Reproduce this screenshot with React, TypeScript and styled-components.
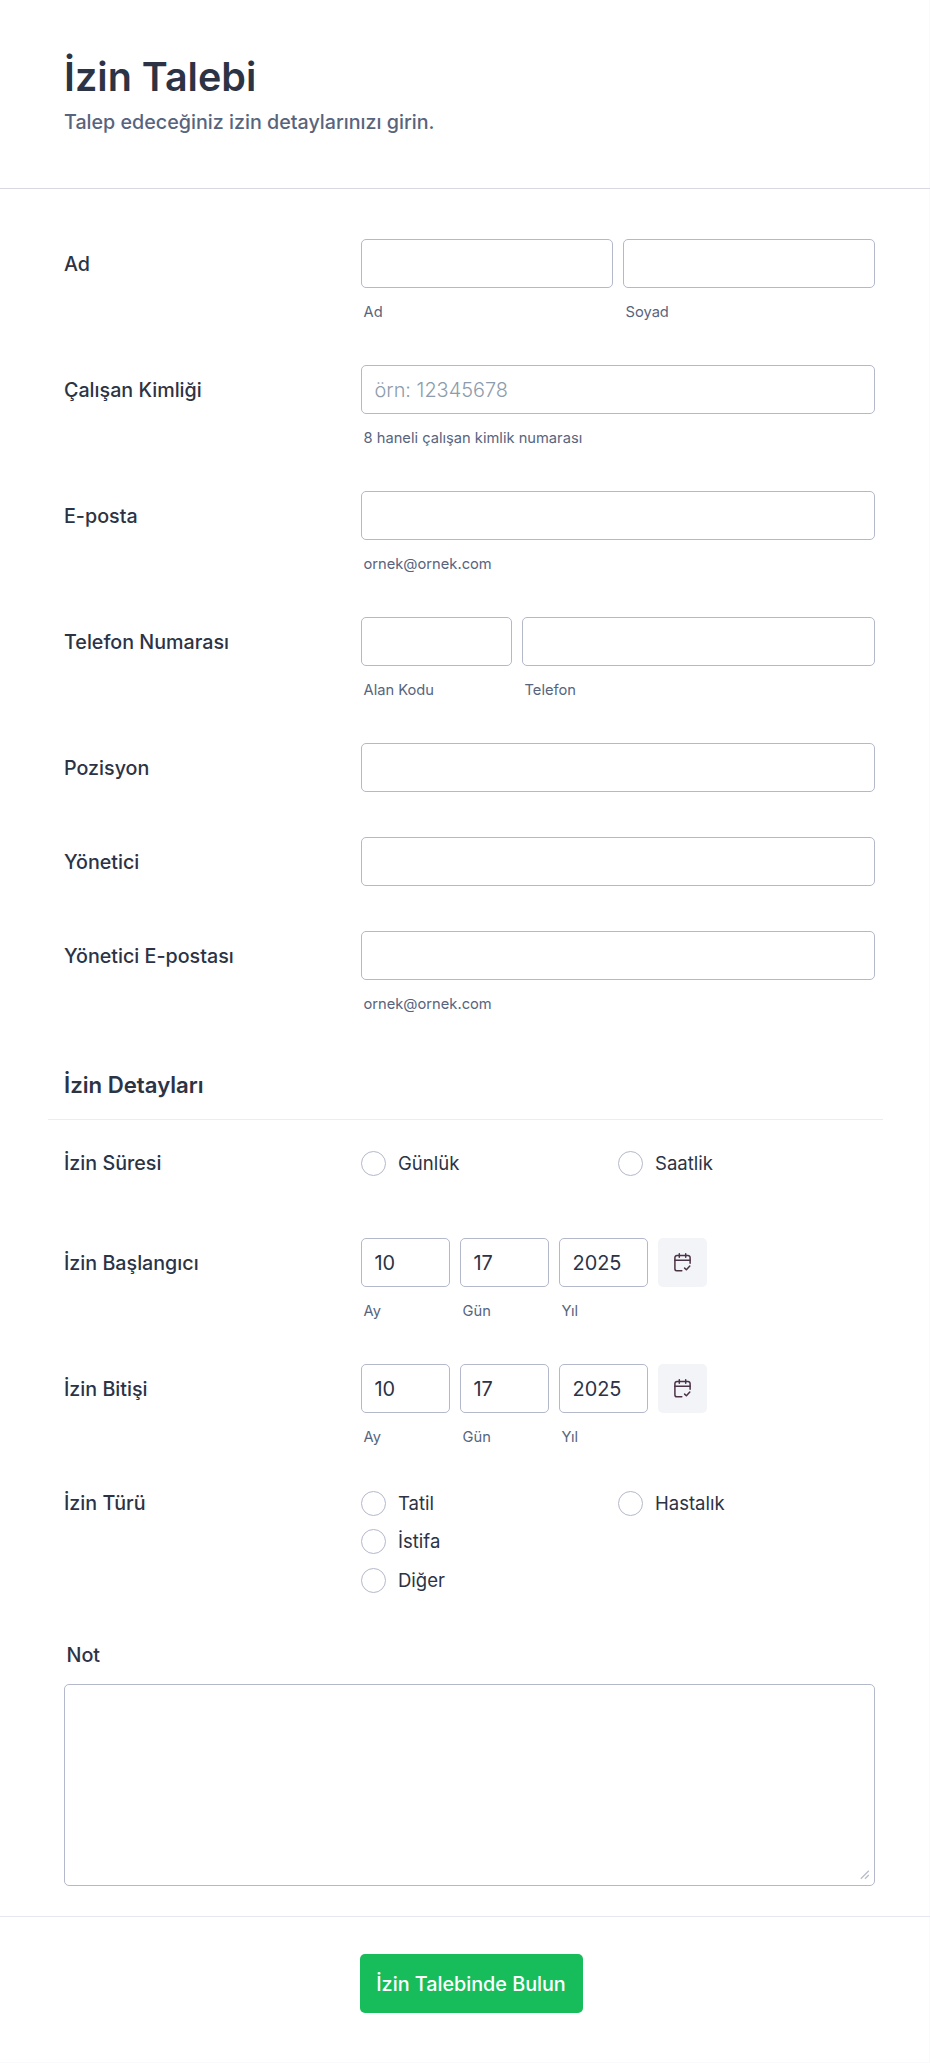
import React from 'react';
import styled, { createGlobalStyle } from 'styled-components';

const GlobalStyle = createGlobalStyle`
  *, *::before, *::after { box-sizing: border-box; }
  body { margin: 0; background: #fff; font-family: Inter, "Liberation Sans", sans-serif; color: #2c3345; }
  input, textarea, button { font-family: inherit; }
`;

const Form = styled.form`
  display: flex;
  flex-direction: column;
  width: 930px;
  height: 2063px;
  background: #fff;
  box-shadow: inset -1px -1px 0 #fafafc;
`;

const Header = styled.header`
  height: 189px;
  padding: 52px 64px 0;
  border-bottom: 1px solid #d7d8e1;
`;

const Title = styled.h1`
  margin: 0;
  font-size: 39.5px;
  line-height: 50px;
  font-weight: 600;
`;

const Subtitle = styled.p`
  margin: 8px 0 0;
  font-size: 19.7px;
  line-height: 24px;
  font-weight: 500;
  color: #57647e;
`;

const Fields = styled.div`
  display: flex;
  flex-direction: column;
  padding: 50px 55px 0 64px;
`;

const Row = styled.div<{ $height: number }>`
  display: grid;
  grid-template-columns: 297px 514px;
  align-items: start;
  height: ${(p) => p.$height}px;
`;

const Label = styled.label<{ $line?: number }>`
  font-size: 19.7px;
  font-weight: 500;
  line-height: ${(p) => p.$line ?? 50}px;
`;

const Inputs = styled.div<{ $columns: string }>`
  display: grid;
  grid-template-columns: ${(p) => p.$columns};
  column-gap: 10px;
`;

const Cell = styled.div`
  display: flex;
  flex-direction: column;
  min-width: 0;
`;

const TextInput = styled.input`
  width: 100%;
  height: 49px;
  padding: 0 12.5px;
  border: 1px solid #b4b8cb;
  border-radius: 5px;
  background: #fff;
  color: #2c3345;
  font-size: 19.9px;
  outline: none;
  &::placeholder { color: #8d9cac; font-weight: 300; opacity: 1; }
`;

const SubLabel = styled.span`
  margin-top: 15px;
  padding-left: 2.5px;
  font-size: 14.7px;
  line-height: 18px;
  color: #57647e;
  white-space: nowrap;
`;

const SectionHead = styled.div`
  height: 63px;
  margin: 0 -8px 31px -16px;
  padding: 14px 16px 0;
  border-bottom: 1px solid #ecedf1;
`;

const SectionTitle = styled.h2`
  margin: 0;
  font-size: 22.2px;
  line-height: 28px;
  font-weight: 600;
`;

const Options = styled.div`
  display: grid;
  grid-template-columns: 257px 257px;
  grid-auto-rows: 25px;
  row-gap: 13.4px;
`;

const Option = styled.label<{ $startsLine?: boolean }>`
  display: flex;
  align-items: center;
  gap: 12px;
  font-size: 18.55px;
  line-height: 25px;
  grid-column: ${(p) => (p.$startsLine ? '1' : 'auto')};
`;

const Radio = styled.input`
  appearance: none;
  width: 25px;
  height: 25px;
  margin: 0;
  border: 1px solid #b4b8cb;
  border-radius: 50%;
  background: #fff;
`;

const DateButton = styled.button`
  display: flex;
  align-items: center;
  justify-content: center;
  width: 49px;
  height: 49px;
  padding: 0;
  border: 0;
  border-radius: 5px;
  background: #f3f4f8;
`;

const NoteBlock = styled.div`
  display: flex;
  flex-direction: column;
  position: relative;
  width: 811px;
`;

const NoteLabel = styled.label`
  padding-left: 2.5px;
  font-size: 19.75px;
  line-height: 24px;
  font-weight: 500;
`;

const NoteArea = styled.textarea`
  height: 202px;
  margin-top: 17px;
  padding: 12px;
  border: 1px solid #b4b8cb;
  border-radius: 5px;
  background: #fff;
  resize: none;
  outline: none;
`;

const ResizeGrip = styled.svg`
  position: absolute;
  right: 5px;
  bottom: 6px;
`;

const Footer = styled.footer`
  display: flex;
  justify-content: center;
  margin-top: 30px;
  padding: 37px 0 0 12px;
  border-top: 1px solid #e6e8f1;
`;

const Submit = styled.button`
  width: 223px;
  height: 59px;
  padding: 1px 0 0;
  border: 0;
  border-radius: 5px;
  background: #18bd5b;
  color: #fff;
  font-size: 19.75px;
  font-weight: 500;
  white-space: nowrap;
`;

const CalendarIcon = () => (
  <svg width="17" height="19" viewBox="0 0 17 19" fill="none" stroke="#4b3347" strokeWidth="1.5" strokeLinecap="round" strokeLinejoin="round">
    <path d="M7.8 17.8H3a2.1 2.1 0 0 1-2.1-2.1V4.6A2.1 2.1 0 0 1 3 2.5h11a2.1 2.1 0 0 1 2.1 2.1v5.6" />
    <path d="M.9 7.3h15.2M5.3.8v3.5M11.7.8v3.5" />
    <path d="m10.6 15.1 1.8 1.7 3.4-3.7" />
  </svg>
);

type Field = { hint?: string; value?: string; placeholder?: string };

const FieldRow = ({ label, columns = '514px', fields, height = 126 }: {
  label: string; columns?: string; fields: Field[]; height?: number;
}) => (
  <Row $height={height}>
    <Label>{label}</Label>
    <Inputs $columns={columns}>
      {fields.map((f, i) => (
        <Cell key={i}>
          <TextInput defaultValue={f.value} placeholder={f.placeholder} />
          {f.hint && <SubLabel>{f.hint}</SubLabel>}
        </Cell>
      ))}
    </Inputs>
  </Row>
);

const DateRow = ({ label, height }: { label: string; height: number }) => (
  <Row $height={height}>
    <Label>{label}</Label>
    <Inputs $columns="89px 89px 89px 49px">
      {[['10', 'Ay'], ['17', 'Gün'], ['2025', 'Yıl']].map(([value, hint]) => (
        <Cell key={hint}>
          <TextInput defaultValue={value} />
          <SubLabel>{hint}</SubLabel>
        </Cell>
      ))}
      <DateButton type="button"><CalendarIcon /></DateButton>
    </Inputs>
  </Row>
);

const ChoiceRow = ({ label, name, lines, height }: {
  label: string; name: string; lines: string[][]; height: number;
}) => (
  <Row $height={height}>
    <Label $line={24}>{label}</Label>
    <Options>
      {lines.map((line) => line.map((o, i) => (
        <Option key={o} $startsLine={i === 0}><Radio type="radio" name={name} />{o}</Option>
      )))}
    </Options>
  </Row>
);

export default function App() {
  return (
    <>
      <GlobalStyle />
      <Form>
        <Header>
          <Title>İzin Talebi</Title>
          <Subtitle>Talep edeceğiniz izin detaylarınızı girin.</Subtitle>
        </Header>
        <Fields>
          <FieldRow label="Ad" columns="252px 252px" fields={[{ hint: 'Ad' }, { hint: 'Soyad' }]} />
          <FieldRow label="Çalışan Kimliği" fields={[{ placeholder: 'örn: 12345678', hint: '8 haneli çalışan kimlik numarası' }]} />
          <FieldRow label="E-posta" fields={[{ hint: 'ornek@ornek.com' }]} />
          <FieldRow label="Telefon Numarası" columns="151px 353px" fields={[{ hint: 'Alan Kodu' }, { hint: 'Telefon' }]} />
          <FieldRow label="Pozisyon" fields={[{}]} height={94} />
          <FieldRow label="Yönetici" fields={[{}]} height={94} />
          <FieldRow label="Yönetici E-postası" fields={[{ hint: 'ornek@ornek.com' }]} />
          <SectionHead><SectionTitle>İzin Detayları</SectionTitle></SectionHead>
          <ChoiceRow label="İzin Süresi" name="duration" lines={[['Günlük', 'Saatlik']]} height={87} />
          <DateRow label="İzin Başlangıcı" height={126} />
          <DateRow label="İzin Bitişi" height={127} />
          <ChoiceRow label="İzin Türü" name="kind" lines={[['Tatil', 'Hastalık'], ['İstifa'], ['Diğer']]} height={152} />
          <NoteBlock>
            <NoteLabel>Not</NoteLabel>
            <NoteArea />
            <ResizeGrip width="10" height="10" viewBox="0 0 10 10" stroke="#b8bdc9" strokeWidth="1.3" fill="none">
              <path d="M.8 8.8 8.8.8M5 8.8l3.8-3.8" />
            </ResizeGrip>
          </NoteBlock>
        </Fields>
        <Footer><Submit type="button">İzin Talebinde Bulun</Submit></Footer>
      </Form>
    </>
  );
}
